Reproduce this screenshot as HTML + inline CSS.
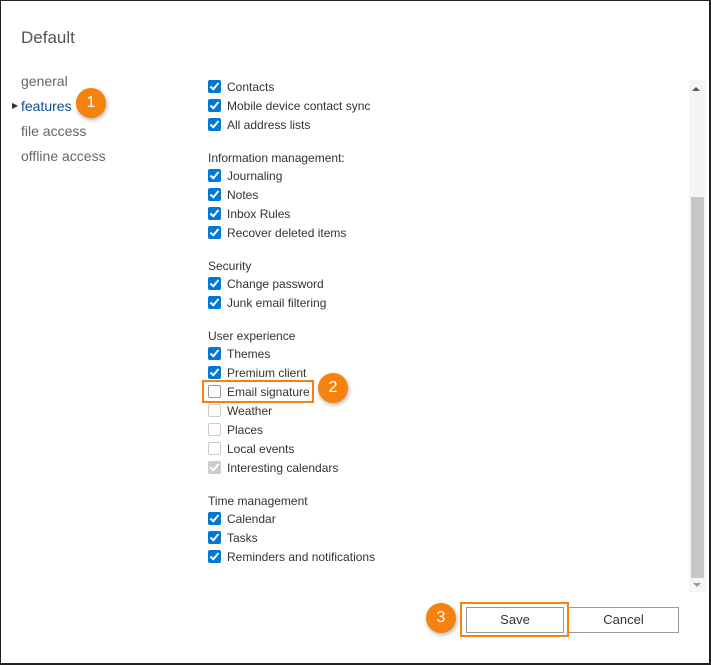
<!DOCTYPE html>
<html><head><style>
body{margin:0;width:711px;height:665px;overflow:hidden;background:#fff;font-family:"Liberation Sans",sans-serif;}
.frame{position:absolute;left:0;top:0;width:708px;height:662px;border:1px solid #222;border-right-width:2px;border-bottom-width:2px;}
.a{position:absolute;white-space:nowrap;}
.title{left:21px;top:28px;font-size:17px;color:#555;}
.nav{left:21px;font-size:14px;color:#666;}
.row{position:absolute;left:208px;font-size:12px;color:#333;height:19px;line-height:19px;}
.cb{display:inline-block;width:11px;height:11px;border-radius:2px;vertical-align:-2px;margin-right:6px;position:relative;}
.on{background:#0078d7;border:1px solid #0078d7;}
.on:after{content:"";position:absolute;left:3px;top:0px;width:3px;height:7px;border:solid #fff;border-width:0 2px 2px 0;transform:rotate(40deg);}
.off{border:1px solid #999;background:#fff;}
.dis{border:1px solid #ccc;background:#fff;}
.dison{background:#ccc;border:1px solid #ccc;}
.dison:after{content:"";position:absolute;left:3px;top:0px;width:3px;height:7px;border:solid #fff;border-width:0 2px 2px 0;transform:rotate(40deg);}
.hdr{position:absolute;left:208px;font-size:12px;color:#333;}
.badge{position:absolute;width:30px;height:30px;border-radius:50%;background:#f5820d;color:#fff;font-size:16px;text-align:center;line-height:30px;box-shadow:1px 2px 4px rgba(0,0,0,.3);}
.btn{position:absolute;top:607px;height:24px;border:1px solid #999;background:#fff;font-size:13px;color:#333;text-align:center;line-height:24px;}
</style></head><body>
<div class="frame"></div>
<div class="a title">Default</div>
<div class="a nav" style="top:73px">general</div>
<div class="a" style="left:12px;top:101px;font-size:8px;color:#333">&#9654;</div>
<div class="a nav" style="top:98px;color:#0b4f8a">features</div>
<div class="a nav" style="top:123px">file access</div>
<div class="a nav" style="top:148px">offline access</div>
<div class="badge" style="left:76px;top:88px">1</div>

<div class="row" style="top:78px"><span class="cb on"></span>Contacts</div>
<div class="row" style="top:97px"><span class="cb on"></span>Mobile device contact sync</div>
<div class="row" style="top:116px"><span class="cb on"></span>All address lists</div>
<div class="hdr" style="top:151px">Information management:</div>
<div class="row" style="top:167px"><span class="cb on"></span>Journaling</div>
<div class="row" style="top:186px"><span class="cb on"></span>Notes</div>
<div class="row" style="top:205px"><span class="cb on"></span>Inbox Rules</div>
<div class="row" style="top:224px"><span class="cb on"></span>Recover deleted items</div>
<div class="hdr" style="top:259px">Security</div>
<div class="row" style="top:275px"><span class="cb on"></span>Change password</div>
<div class="row" style="top:294px"><span class="cb on"></span>Junk email filtering</div>
<div class="hdr" style="top:329px">User experience</div>
<div class="row" style="top:345px"><span class="cb on"></span>Themes</div>
<div class="row" style="top:364px"><span class="cb on"></span>Premium client</div>
<div class="row" style="top:383px"><span class="cb off"></span>Email signature</div>
<div class="a" style="left:202px;top:380px;width:108px;height:19px;border:2px solid #f5820d"></div>
<div class="badge" style="left:318px;top:373px">2</div>
<div class="row" style="top:402px"><span class="cb dis"></span>Weather</div>
<div class="row" style="top:421px"><span class="cb dis"></span>Places</div>
<div class="row" style="top:440px"><span class="cb dis"></span>Local events</div>
<div class="row" style="top:459px"><span class="cb dison"></span>Interesting calendars</div>
<div class="hdr" style="top:494px">Time management</div>
<div class="row" style="top:510px"><span class="cb on"></span>Calendar</div>
<div class="row" style="top:529px"><span class="cb on"></span>Tasks</div>
<div class="row" style="top:548px"><span class="cb on"></span>Reminders and notifications</div>

<div class="a" style="left:689px;top:80px;width:17px;height:512px;background:#f5f5f5"></div>
<div class="a" style="left:692px;top:87px;width:0;height:0;border-left:4px solid transparent;border-right:4px solid transparent;border-bottom:4px solid #555"></div>
<div class="a" style="left:691px;top:197px;width:13px;height:381px;background:#c6c6c6"></div>
<div class="a" style="left:693px;top:583px;width:0;height:0;border-left:4px solid transparent;border-right:4px solid transparent;border-top:4px solid #999"></div>

<div class="btn" style="left:466px;width:96px">Save</div>
<div class="a" style="left:460px;top:602px;width:105px;height:31px;border:2px solid #f5820d"></div>
<div class="btn" style="left:569px;width:109px;border-left:none">Cancel</div>
<div class="badge" style="left:426px;top:603px">3</div>
</body></html>
